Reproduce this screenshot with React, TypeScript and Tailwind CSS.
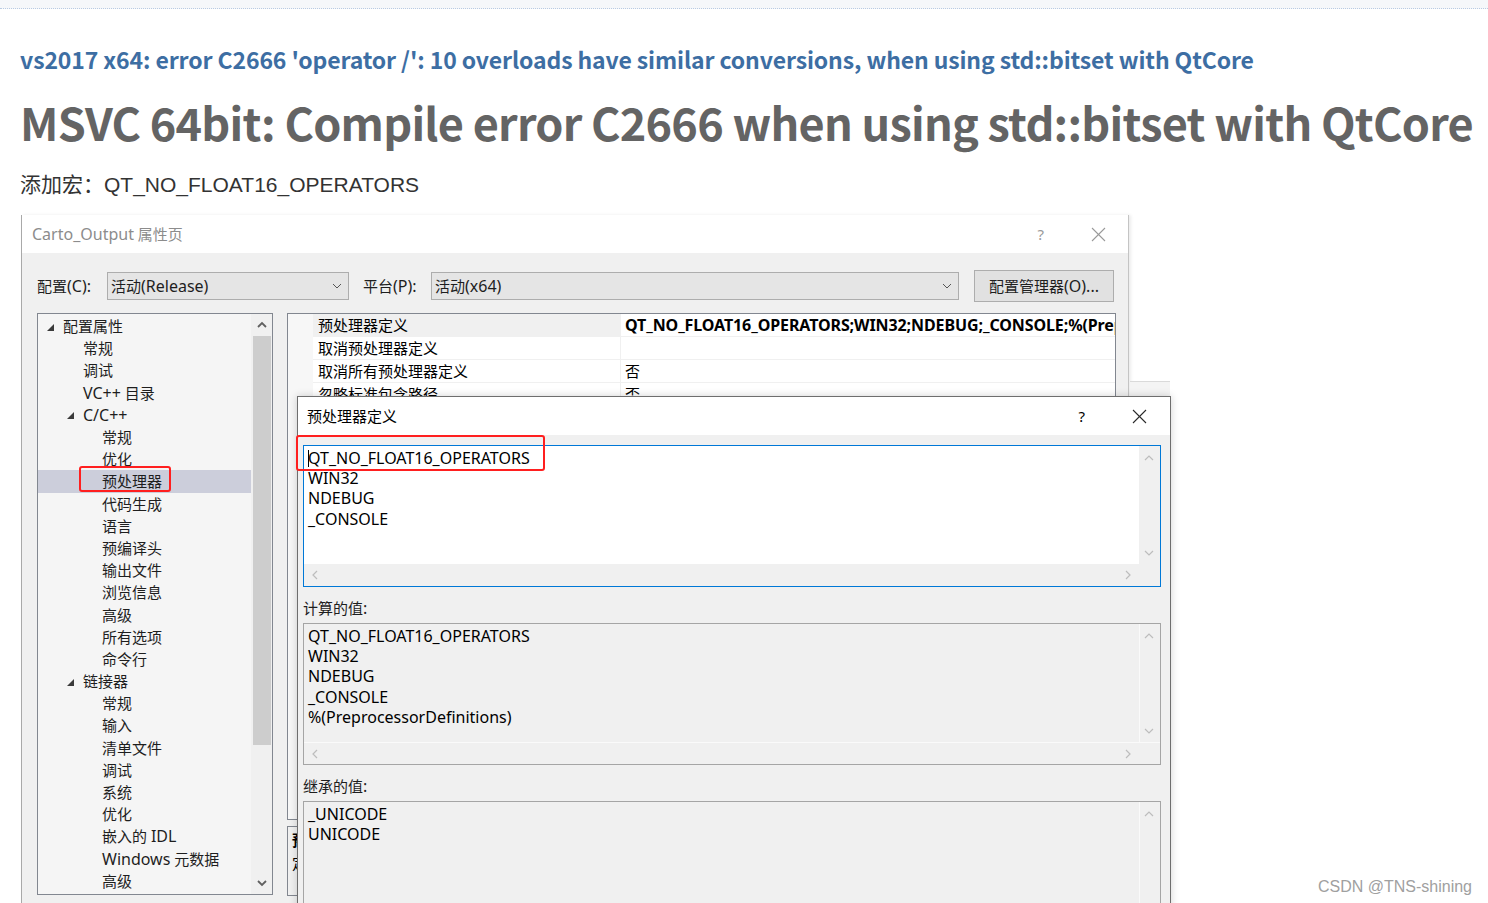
import React from "react";

type Dir = "up" | "down" | "left" | "right";

function Chev({ d, c = "#bdbdbd", w = 1.2 }: { d: Dir; c?: string; w?: number }) {
  const pts = {
    up: "1,6 5,2 9,6",
    down: "1,2 5,6 9,2",
    left: "6,1 2,5 6,9",
    right: "2,1 6,5 2,9",
  }[d];
  const horiz = d === "left" || d === "right";
  return (
    <svg width={horiz ? 8 : 10} height={horiz ? 10 : 8} viewBox={horiz ? "0 0 8 10" : "0 0 10 8"}>
      <polyline points={pts} fill="none" stroke={c} strokeWidth={w} />
    </svg>
  );
}

function CloseX({ c = "#3c3c3c" }: { c?: string }) {
  return (
    <svg width="15" height="15" viewBox="0 0 15 15">
      <line x1="1" y1="1" x2="14" y2="14" stroke={c} strokeWidth="1.1" />
      <line x1="14" y1="1" x2="1" y2="14" stroke={c} strokeWidth="1.1" />
    </svg>
  );
}

function Tri() {
  return (
    <svg width="7" height="7" viewBox="0 0 7 7">
      <polygon points="7,0 7,7 0,7" fill="#3a3a3a" />
    </svg>
  );
}

/* Latin run, slightly larger to mimic the UI font's proportions */
function L({ children }: { children: React.ReactNode }) {
  return <span className="text-[16px]">{children}</span>;
}

const tree: [number, React.ReactNode, boolean?][] = [
  [0, "配置属性", true],
  [1, "常规"],
  [1, "调试"],
  [1, <><L>VC++</L> 目录</>],
  [1, <L>C/C++</L>, true],
  [2, "常规"],
  [2, "优化"],
  [2, "预处理器"],
  [2, "代码生成"],
  [2, "语言"],
  [2, "预编译头"],
  [2, "输出文件"],
  [2, "浏览信息"],
  [2, "高级"],
  [2, "所有选项"],
  [2, "命令行"],
  [1, "链接器", true],
  [2, "常规"],
  [2, "输入"],
  [2, "清单文件"],
  [2, "调试"],
  [2, "系统"],
  [2, "优化"],
  [2, <>嵌入的 <L>IDL</L></>],
  [2, <><L>Windows</L> 元数据</>],
  [2, "高级"],
];

function TreeRow({ level, label, exp, sel }: { level: number; label: React.ReactNode; exp?: boolean; sel?: boolean }) {
  let pad = "pl-[64px]";
  if (level === 0 && exp) pad = "pl-[9px]";
  else if (level === 1 && exp) pad = "pl-[29px]";
  else if (level === 1) pad = "pl-[45px]";
  return (
    <div className={`relative flex items-center h-[22.2px] ${pad} ${sel ? "bg-[#cccedb]" : ""}`}>
      {exp && (
        <span className="w-[16px] flex items-center pt-[2px]">
          <Tri />
        </span>
      )}
      <span className="leading-[20px] text-[#1e1e1e] whitespace-nowrap">{label}</span>
      {sel && (
        <div className="absolute left-[41px] top-[-4px] w-[92px] h-[26px] border-2 border-[#ff1f1f] rounded-[3px]" />
      )}
    </div>
  );
}

function TextBox({
  lines,
  focused,
  height,
  hscroll = true,
}: {
  lines: string[];
  focused?: boolean;
  height: string;
  hscroll?: boolean;
}) {
  return (
    <div
      className={`shrink-0 flex flex-col ${height} border ${
        focused ? "border-[#0078d7] bg-white" : "border-[#a5a5a5] bg-[#f0f0f0]"
      }`}
    >
      <div className="flex flex-1 min-h-0">
        <div className="flex-1 pl-[4px] pt-[2px] text-[16px] leading-[20.2px] text-black whitespace-pre">
          {lines.map((l, i) => (
            <div key={i} className="relative">
              {focused && i === 0 && <span className="absolute left-0 top-[2px] w-px h-[17px] bg-black" />}
              {l}
            </div>
          ))}
        </div>
        <div
          className={`w-[21px] flex flex-col items-center justify-between pt-[8px] pb-[7px] pr-[2px] bg-[#f0f0f0] ${
            focused ? "" : "border-l border-[#fafafa]"
          }`}
        >
          <Chev d="up" />
          {hscroll ? <Chev d="down" /> : <span />}
        </div>
      </div>
      {hscroll && (
        <div className={`shrink-0 flex h-[22px] bg-[#f0f0f0] ${focused ? "" : "border-t border-[#fafafa]"}`}>
          <div className="flex-1 flex items-center justify-between pl-[7px] pr-[7px]">
            <Chev d="left" />
            <Chev d="right" />
          </div>
          <div className="w-[21px]" />
        </div>
      )}
    </div>
  );
}

const gridRows: [string, string, boolean?][] = [
  ["预处理器定义", "QT_NO_FLOAT16_OPERATORS;WIN32;NDEBUG;_CONSOLE;%(PreprocessorDefinitions)", true],
  ["取消预处理器定义", ""],
  ["取消所有预处理器定义", "否"],
  ["忽略标准包含路径", "否"],
  ["预处理到文件", "否"],
  ["预处理取消显示行号", "否"],
  ["保留注释", "否"],
];

export default function App() {
  return (
    <div className="relative w-[1488px] h-[903px] overflow-hidden bg-white font-['Noto_Sans','Noto_Sans_CJK_SC',sans-serif]">
      <div className="h-[9px] bg-[#f5f7fa] border-b border-dotted border-[#b9cbe3]" />
      <div className="pl-[20px]">
        <div className="mt-[34px] h-[32px] flex items-center text-[23px] font-bold text-[#3d6ea3] whitespace-nowrap font-['Noto_Sans_CJK_SC',sans-serif] tracking-[-0.12px]">
          vs2017 x64: error C2666 'operator /': 10 overloads have similar conversions, when using std::bitset with QtCore
        </div>
        <div className="mt-[19px] h-[56px] flex items-center text-[45px] font-bold text-[#646464] whitespace-nowrap font-['Noto_Sans_CJK_SC',sans-serif] tracking-[-0.75px]">
          MSVC 64bit: Compile error C2666 when using std::bitset with QtCore
        </div>
        <div className="mt-[21px] h-[28px] flex items-center text-[21px] text-[#333] whitespace-nowrap font-['Liberation_Sans','Noto_Sans_CJK_SC',sans-serif]">
          添加宏：QT_NO_FLOAT16_OPERATORS
        </div>
      </div>

      {/* screenshot */}
      <div className="relative ml-[20px] mt-[16px] w-[1160px] h-[688px] text-[15px]">
        <div className="ml-px w-[1108px] h-full flex flex-col border-l border-[#a9a9a9] border-r border-r-[#c4c4c4] shadow-[2px_0_3px_rgba(0,0,0,0.08)]">
          <div className="shrink-0 h-[38px] bg-white flex items-center pl-[10px] text-[#8c8c8c]">
            <span>
              <L>Carto_Output</L> 属性页
            </span>
            <span className="ml-auto text-[#9a9a9a] text-[15px]">?</span>
            <span className="ml-[47px] mr-[22px] flex items-center">
              <CloseX c="#9a9a9a" />
            </span>
          </div>
          <div className="flex-1 bg-[#f0f0f0] flex flex-col">
            <div className="mt-[17px] h-[32px] flex items-center pl-[15px] text-[#1e1e1e]">
              <span className="w-[70px] shrink-0">配置<L>(C):</L></span>
              <div className="w-[242px] shrink-0 h-[28px] bg-[#e5e5e5] border border-[#adadad] flex items-center pl-[3px] pr-[6px]">
                <span>活动<L>(Release)</L></span>
                <span className="ml-auto flex">
                  <Chev d="down" c="#555" w={1} />
                </span>
              </div>
              <span className="ml-[14px] w-[68px] shrink-0">平台<L>(P):</L></span>
              <div className="w-[528px] shrink-0 h-[28px] bg-[#e5e5e5] border border-[#adadad] flex items-center pl-[3px] pr-[6px]">
                <span>活动<L>(x64)</L></span>
                <span className="ml-auto flex">
                  <Chev d="down" c="#555" w={1} />
                </span>
              </div>
              <div className="ml-[15px] w-[140px] shrink-0 h-[32px] bg-[#e1e1e1] border border-[#adadad] flex items-center justify-center">
                配置管理器<L>(O)...</L>
              </div>
            </div>
            <div className="mt-[11px] flex pl-[15px]">
              {/* tree */}
              <div className="w-[236px] shrink-0 h-[582px] border border-[#828790] bg-[#f5f5f5] flex">
                <div className="flex-1 pt-px">
                  {tree.map(([lv, label, exp], i) => (
                    <TreeRow key={i} level={lv} label={label} exp={exp} sel={i === 7} />
                  ))}
                </div>
                <div className="w-[21px] shrink-0 bg-[#f0f0f0] flex flex-col items-center">
                  <div className="h-[22px] flex items-center">
                    <Chev d="up" c="#606060" w={1.8} />
                  </div>
                  <div className="w-[18px] h-[409px] bg-[#cdcdcd]" />
                  <div className="mt-auto h-[22px] flex items-center">
                    <Chev d="down" c="#606060" w={1.8} />
                  </div>
                </div>
              </div>
              {/* grid */}
              <div className="ml-[14px] w-[829px] shrink-0 flex flex-col">
                <div className="w-[829px] h-[507px] border border-[#828790] bg-white flex overflow-hidden">
                  <div className="w-[25px] shrink-0 bg-[#f7f7f7]" />
                  <div className="flex-1 min-w-0">
                    {gridRows.map(([k, v, sel], i) => (
                      <div key={i} className="flex h-[23px] border-b border-[#f0f0f0]">
                        <div className={`w-[307px] shrink-0 pl-[5px] flex items-center ${sel ? "bg-[#f0f0f0]" : ""}`}>
                          {k}
                        </div>
                        <div
                          className={`flex-1 min-w-0 pl-[4px] flex items-center overflow-hidden whitespace-nowrap border-l border-[#f0f0f0] ${
                            sel ? "font-bold text-[16px] tracking-[-0.1px]" : ""
                          }`}
                        >
                          {v}
                        </div>
                      </div>
                    ))}
                  </div>
                </div>
                <div className="mt-[6px] w-[829px] h-[70px] border border-[#828790] bg-[#f0f0f0] pl-[4px] pt-[2px] font-bold">
                  预处理器定义
                  <div className="font-normal">定义源文件的预处理符号。</div>
                </div>
              </div>
            </div>
          </div>
        </div>

        {/* window behind, right side */}
        <div className="absolute left-[1110px] top-[166px] w-[40px] h-[16px] bg-[#f4f4f4] border-t border-[#dadada]" />

        {/* inner dialog */}
        <div className="absolute left-[277px] top-[181px] w-[874px] h-[560px] border border-[#6e6e6e] bg-[#f0f0f0] flex flex-col shadow-[0_0_8px_rgba(0,0,0,0.18)]">
          <div className="shrink-0 h-[38px] bg-white flex items-center pl-[9px] text-black">
            <span>预处理器定义</span>
            <span className="ml-auto text-[15px]">?</span>
            <span className="ml-[47px] mr-[23px] flex items-center">
              <CloseX c="#2a2a2a" />
            </span>
          </div>
          <div className="shrink-0 pl-[5px] pr-[9px] flex flex-col">
            <div className="mt-[10px] shrink-0">
              <TextBox
                focused
                height="h-[142px]"
                lines={["QT_NO_FLOAT16_OPERATORS", "WIN32", "NDEBUG", "_CONSOLE"]}
              />
            </div>
            <div className="shrink-0 h-[36px] pt-[6px] flex items-center text-[#1e1e1e]">
              计算的值<L>:</L>
            </div>
            <TextBox
              height="h-[142px]"
              lines={["QT_NO_FLOAT16_OPERATORS", "WIN32", "NDEBUG", "_CONSOLE", "%(PreprocessorDefinitions)"]}
            />
            <div className="shrink-0 h-[36px] pt-[6px] flex items-center text-[#1e1e1e]">
              继承的值<L>:</L>
            </div>
            <TextBox height="h-[142px]" hscroll={false} lines={["_UNICODE", "UNICODE"]} />
          </div>
          <div className="absolute left-[-2px] top-[38px] w-[249px] h-[36px] border-2 border-[#ff1f1f] rounded-[3px]" />
        </div>
      </div>

      <div className="absolute right-[16px] top-[875px] text-[16px] text-[#a0a0a0] font-['Liberation_Sans',sans-serif] whitespace-nowrap">
        CSDN @TNS-shining
      </div>
    </div>
  );
}
